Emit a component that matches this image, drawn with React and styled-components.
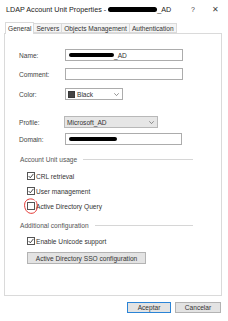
import React from 'react'
import styled, { createGlobalStyle } from 'styled-components'

const Global = createGlobalStyle`
  html, body { margin: 0; padding: 0; background: #fff; }
  body { font-family: "Liberation Sans", Arial, sans-serif; color: #333; }
`

const Window = styled.div`
  width: 228px;
  height: 321px;
  display: flex;
  flex-direction: column;
  background: #fff;
  font-size: 6.6px;
`

const TitleBar = styled.div`
  height: 18px;
  display: flex;
  align-items: center;
  padding: 0 2px 0 6px;
`

const Title = styled.div`
  flex: 1;
  display: flex;
  align-items: center;
  font-size: 7.2px;
  color: #222;
  white-space: pre;
`

const TitleBtn = styled.div`
  width: 22px;
  text-align: center;
  font-size: ${p => p.$size || 7}px;
  color: #444;
`

const Redact = styled.span`
  display: inline-block;
  width: ${p => p.$w}px;
  height: ${p => p.$h || 4}px;
  background: #000;
  border-radius: 3px;
`

const TabStrip = styled.div`
  margin-top: 4px;
  height: 11px;
  display: flex;
  align-items: flex-end;
  padding-left: 5px;
`

const Tab = styled.div`
  position: relative;
  box-sizing: border-box;
  height: ${p => (p.$active ? 12 : 10)}px;
  margin-bottom: ${p => (p.$active ? -1 : 0)}px;
  z-index: ${p => (p.$active ? 1 : 0)};
  padding: 0 2px;
  display: flex;
  align-items: center;
  background: ${p => (p.$active ? '#fff' : '#f4f4f4')};
  border: 1px solid #dadada;
  border-bottom: ${p => (p.$active ? 'none' : '1px solid #dadada')};
  margin-left: -1px;
  &:first-child { margin-left: 0; }
`

const Panel = styled.div`
  box-sizing: border-box;
  height: 263px;
  margin: 0 6px 0 4px;
  border: 1px solid #dadada;
  background: #fff;
  padding: 15px 0 0 14px;
  display: flex;
  flex-direction: column;
`

const FieldRow = styled.div`
  display: grid;
  grid-template-columns: 46px auto;
  align-items: center;
  height: 12px;
  margin-top: ${p => p.$mt || 0}px;
`

const Label = styled.span`
  color: #444;
`

const TextBox = styled.div`
  box-sizing: border-box;
  width: ${p => p.$w}px;
  height: 12px;
  border: 1px solid #acacac;
  background: #fff;
  display: flex;
  align-items: center;
  padding-left: 3px;
  color: #333;
`

const Select = styled.div`
  box-sizing: border-box;
  width: ${p => p.$w}px;
  height: 12px;
  margin-left: ${p => p.$ml || 0}px;
  border: 1px solid ${p => (p.$grey ? '#b8b8b8' : '#acacac')};
  background: ${p => (p.$grey ? '#e6e6e6' : '#fff')};
  display: flex;
  align-items: center;
  padding: 0 3px 0 2px;
  gap: 2px;
  color: #333;
`

const SelectText = styled.span`
  flex: 1;
`

const Swatch = styled.span`
  width: 7px;
  height: 7px;
  background: #454545;
  border: 1px solid #3a3a3a;
  box-sizing: border-box;
`

const Section = styled.div`
  display: flex;
  align-items: center;
  gap: 6px;
  width: 173px;
  height: 8px;
  margin: ${p => p.$mt}px 0 0 1px;
  color: #555;
`

const Rule = styled.span`
  flex: 1;
  height: 1px;
  background: #d6d6d6;
`

const CheckRow = styled.div`
  position: relative;
  display: flex;
  align-items: center;
  gap: 1px;
  height: 8px;
  margin: ${p => p.$mt}px 0 0 8px;
  color: #333;
`

const Box = styled.span`
  box-sizing: border-box;
  width: 8px;
  height: 8px;
  border: 1px solid #555;
  background: #fff;
  display: flex;
  align-items: center;
  justify-content: center;
`

const Circle = styled.svg`
  position: absolute;
  left: -3px;
  top: -4px;
  width: 14px;
  height: 16px;
  overflow: visible;
`

const SsoButton = styled.div`
  box-sizing: border-box;
  width: 119px;
  height: 12px;
  margin: 7px 0 0 8px;
  border: 1px solid #b3b3b3;
  background: #e3e3e3;
  display: flex;
  align-items: center;
  justify-content: center;
  color: #333;
`

const Footer = styled.div`
  display: flex;
  justify-content: flex-end;
  gap: 4px;
  margin-top: 6px;
  padding-right: 7px;
`

const Button = styled.div`
  box-sizing: border-box;
  width: ${p => p.$w}px;
  height: 11px;
  border: 1px solid ${p => (p.$primary ? '#2b84d6' : '#b3b3b3')};
  background: #e3e3e3;
  display: flex;
  align-items: center;
  justify-content: center;
  color: #333;
`

const Chevron = () => (
  <svg width="5" height="3" viewBox="0 0 5 3">
    <polyline points="0.3,0.3 2.5,2.6 4.7,0.3" fill="none" stroke="#666" strokeWidth="0.7" />
  </svg>
)

const Check = ({ checked, circled, children, mt }) => (
  <CheckRow $mt={mt}>
    <Box>
      {checked && (
        <svg width="6" height="6" viewBox="0 0 6 6">
          <polyline points="0.6,3 2.3,4.8 5.4,0.9" fill="none" stroke="#333" strokeWidth="0.9" />
        </svg>
      )}
    </Box>
    {children}
    {circled && (
      <Circle viewBox="0 0 14 16">
        <path d="M10.5 2.2 C8 0 2.5 0.6 1 4.5 C-0.3 8.5 1.5 14.5 6.5 15.3 C11 15.8 13.6 12 13.2 7.5 C12.9 5 12.5 3.6 11.6 2.9" fill="none" stroke="#e0201c" strokeWidth="0.9" />
      </Circle>
    )}
  </CheckRow>
)

export default function App() {
  return (
    <Window>
      <Global />
      <TitleBar>
        <Title>
          LDAP Account Unit Properties - <Redact $w={49} $h={5} />_AD
        </Title>
        <TitleBtn>?</TitleBtn>
        <TitleBtn $size={8}>✕</TitleBtn>
      </TitleBar>

      <TabStrip>
        <Tab $active>General</Tab>
        <Tab>Servers</Tab>
        <Tab>Objects Management</Tab>
        <Tab>Authentication</Tab>
      </TabStrip>

      <Panel>
        <FieldRow>
          <Label>Name:</Label>
          <TextBox $w={118}>
            <Redact $w={45} $h={4} />_AD
          </TextBox>
        </FieldRow>
        <FieldRow $mt={7}>
          <Label>Comment:</Label>
          <TextBox $w={118} />
        </FieldRow>
        <FieldRow $mt={8}>
          <Label>Color:</Label>
          <Select $w={58}>
            <Swatch />
            <SelectText>Black</SelectText>
            <Chevron />
          </Select>
        </FieldRow>
        <FieldRow $mt={16}>
          <Label>Profile:</Label>
          <Select $w={94} $ml={-1} $grey>
            <SelectText>Microsoft_AD</SelectText>
            <Chevron />
          </Select>
        </FieldRow>
        <FieldRow $mt={5}>
          <Label>Domain:</Label>
          <TextBox $w={117}>
            <Redact $w={48} $h={4} />
          </TextBox>
        </FieldRow>

        <Section $mt={10}>
          Account Unit usage
          <Rule />
        </Section>
        <Check checked mt={9}>CRL retrieval</Check>
        <Check checked mt={7}>User management</Check>
        <Check circled mt={7}>Active Directory Query</Check>

        <Section $mt={11}>
          Additional configuration
          <Rule />
        </Section>
        <Check checked mt={8}>Enable Unicode support</Check>
        <SsoButton>Active Directory SSO configuration</SsoButton>
      </Panel>

      <Footer>
        <Button $w={44} $primary>Aceptar</Button>
        <Button $w={46}>Cancelar</Button>
      </Footer>
    </Window>
  )
}
